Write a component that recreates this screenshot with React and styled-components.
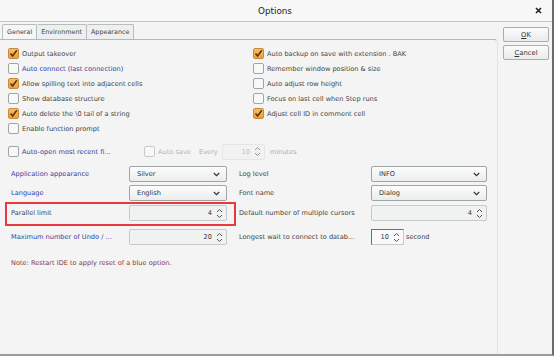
import styled, { createGlobalStyle } from "styled-components";

const GlobalStyle = createGlobalStyle`
  html, body {
    margin: 0;
    padding: 0;
    background: #f3f4f3;
  }
  * {
    box-sizing: border-box;
  }
`;

const leftChecks = [
  { text: "Output takeover", checked: true },
  { text: "Auto connect (last connection)", blue: true },
  { text: "Allow spilling text into adjacent cells", checked: true },
  { text: "Show database structure" },
  { text: "Auto delete the \\0 tail of a string", checked: true },
  { text: "Enable function prompt" },
];

const rightChecks = [
  { text: "Auto backup on save with extension . BAK", checked: true },
  { text: "Remember window position & size" },
  { text: "Auto adjust row height" },
  { text: "Focus on last cell when Step runs" },
  { text: "Adjust cell ID in comment cell", checked: true },
];

function CheckMark() {
  return (
    <svg width="9" height="9" viewBox="0 0 9 9">
      <path d="M1.5 4.6 L3.6 7 L7.8 1.2" fill="none" stroke="#5a3306" strokeWidth="1.5" />
    </svg>
  );
}

function Arrows() {
  return (
    <svg width="7" height="11" viewBox="0 0 7 11">
      <path d="M1 4 L3.5 1.5 L6 4 M1 7 L3.5 9.5 L6 7" fill="none" stroke="#555" strokeWidth="1" />
    </svg>
  );
}

function Chevron() {
  return (
    <svg width="7" height="5" viewBox="0 0 7 5">
      <path d="M0.8 1 L3.5 3.6 L6.2 1" fill="none" stroke="#333" strokeWidth="1.2" />
    </svg>
  );
}

function Check({ text, checked, blue, disabled }) {
  return (
    <CheckRow $blue={blue} $disabled={disabled}>
      <Box $checked={checked} $disabled={disabled}>
        {checked && <CheckMark />}
      </Box>
      {text}
    </CheckRow>
  );
}

function Select({ value, width }) {
  return (
    <SelectBox $width={width}>
      <span>{value}</span>
      <Chevron />
    </SelectBox>
  );
}

function Spinner({ value, width, disabled, sunken }) {
  return (
    <SpinBox $width={width} $disabled={disabled} $sunken={sunken}>
      <span>{value}</span>
      <Arrows />
    </SpinBox>
  );
}

export default function App() {
  return (
    <>
      <GlobalStyle />
      <Window>
        <TitleBar>
          <span />
          <Title>Options</Title>
          <Close>
            <svg width="7" height="7" viewBox="0 0 7 7">
              <path d="M1 1 L6 6 M6 1 L1 6" stroke="#222" strokeWidth="1.6" />
            </svg>
          </Close>
        </TitleBar>
        <Main>
          <Left>
            <Tabs>
              <Tab $active>General</Tab>
              <Tab>Environment</Tab>
              <Tab>Appearance</Tab>
            </Tabs>
            <Panel>
              <CheckGrid>
                <Column>
                  {leftChecks.map((c) => (
                    <Check key={c.text} {...c} />
                  ))}
                </Column>
                <Column>
                  {rightChecks.map((c) => (
                    <Check key={c.text} {...c} />
                  ))}
                </Column>
              </CheckGrid>

              <AutoOpenRow>
                <Slot $w={136}>
                  <Check text="Auto-open most recent fi..." blue />
                </Slot>
                <Slot $w={55}>
                  <Check text="Auto save" disabled />
                </Slot>
                <Slot $w={23}>
                  <Muted>Every</Muted>
                </Slot>
                <Spinner value="10" width={43} disabled />
                <Muted $gap={5}>minutes</Muted>
              </AutoOpenRow>

              <Form>
                <FormRow>
                  <Label $blue>Application appearance</Label>
                  <Select value="Silver" width={98} />
                  <Label>Log level</Label>
                  <Select value="INFO" width={116} />
                </FormRow>
                <FormRow>
                  <Label $blue>Language</Label>
                  <Select value="English" width={98} />
                  <Label>Font name</Label>
                  <Select value="Dialog" width={116} />
                </FormRow>
                <FormRow $gap={4}>
                  <Highlight />
                  <Label>Parallel limit</Label>
                  <Spinner value="4" width={98} />
                  <Label>Default number of multiple cursors</Label>
                  <Spinner value="4" width={116} />
                </FormRow>
                <FormRow $gap={8}>
                  <Label $blue>Maximum number of Undo / ...</Label>
                  <Spinner value="20" width={98} />
                  <Label>Longest wait to connect to datab...</Label>
                  <Inline>
                    <Spinner value="10" width={33} sunken />
                    <Label $pad={2}>second</Label>
                  </Inline>
                </FormRow>
              </Form>

              <Note>Note: Restart IDE to apply reset of a blue option.</Note>
            </Panel>
          </Left>
          <Buttons>
            <Button>
              <u>O</u>K
            </Button>
            <Button>
              <u>C</u>ancel
            </Button>
          </Buttons>
        </Main>
      </Window>
    </>
  );
}

const Window = styled.div`
  width: 554px;
  height: 356px;
  display: flex;
  flex-direction: column;
  background: #f3f4f3;
  font-family: "DejaVu Sans", sans-serif;
  font-size: 6.6px;
  color: #444;
  border-right: 2px solid #6a6a6a;
  border-bottom: 2px solid #9c9c9c;
  overflow: hidden;
`;

const TitleBar = styled.div`
  height: 22px;
  flex-shrink: 0;
  display: grid;
  grid-template-columns: 1fr auto 1fr;
  align-items: center;
  background: #f6f7f6;
  border-bottom: 1px solid #c4c6c6;
`;

const Title = styled.div`
  font-size: 8.8px;
  color: #1c1c1c;
  padding-right: 2px;
`;

const Close = styled.div`
  justify-self: end;
  display: flex;
  padding-right: 10px;
`;

const Main = styled.div`
  flex: 1;
  display: flex;
`;

const Left = styled.div`
  width: 498px;
  display: flex;
  flex-direction: column;
  padding-top: 2px;
`;

const Tabs = styled.div`
  display: flex;
  height: 15px;
  margin-left: 2px;
`;

const Tab = styled.div`
  display: flex;
  align-items: center;
  padding: 0 4px;
  border: 1px solid #b8bcbc;
  border-bottom: none;
  border-left: ${(p) => (p.$active ? "1px solid #b8bcbc" : "none")};
  border-radius: 2px 2px 0 0;
  background: ${(p) => (p.$active ? "#f5f6f5" : "#eef0ef")};
  color: #444;
  font-size: 6.4px;
`;

const Panel = styled.div`
  flex: 1;
  border-top: 1px solid #b4b8b8;
  border-right: 1px solid #e2e4e4;
  border-top-right-radius: 4px;
  padding: 6px 0 0 8px;
`;

const CheckGrid = styled.div`
  display: grid;
  grid-template-columns: 245px 1fr;
`;

const Column = styled.div`
  display: flex;
  flex-direction: column;
`;

const CheckRow = styled.div`
  height: 15px;
  display: flex;
  align-items: center;
  gap: 3px;
  white-space: nowrap;
  color: ${(p) => (p.$disabled ? "#b4b4b4" : p.$blue ? "#3b3ba2" : "#444")};
`;

const Box = styled.div`
  width: 11px;
  height: 11px;
  flex-shrink: 0;
  display: flex;
  align-items: center;
  justify-content: center;
  border-radius: 2px;
  border: 1px solid
    ${(p) => (p.$checked ? "#c9893a" : p.$disabled ? "#c8caca" : "#a2a5a5")};
  background: ${(p) =>
    p.$checked ? "linear-gradient(#f7be6a, #ef9f3c)" : "#f7f8f8"};
`;

const AutoOpenRow = styled.div`
  display: flex;
  align-items: center;
  height: 15px;
  margin-top: 8px;
`;

const Slot = styled.div`
  width: ${(p) => p.$w}px;
  flex-shrink: 0;
`;

const Muted = styled.span`
  color: #b0b0b0;
  margin-left: ${(p) => p.$gap ?? 0}px;
  white-space: nowrap;
`;

const Form = styled.div`
  display: flex;
  flex-direction: column;
  margin: 7px 0 0 3px;
`;

const FormRow = styled.div`
  position: relative;
  display: grid;
  grid-template-columns: 118px 110px 132px 116px;
  align-items: center;
  height: 16px;
  margin-top: ${(p) => p.$gap ?? 3}px;
  &:first-child {
    margin-top: 0;
  }
`;

const Label = styled.div`
  white-space: nowrap;
  overflow: hidden;
  color: ${(p) => (p.$blue ? "#3b3ba2" : "#444")};
  padding-left: ${(p) => p.$pad ?? 0}px;
`;

const Highlight = styled.div`
  position: absolute;
  left: -6px;
  top: -3px;
  width: 231px;
  height: 24px;
  border: 2px solid #e8393f;
  pointer-events: none;
`;

const SelectBox = styled.div`
  height: 16px;
  width: ${(p) => p.$width}px;
  display: flex;
  align-items: center;
  justify-content: space-between;
  padding: 0 6px 0 7px;
  border: 1px solid #a0a5a5;
  border-radius: 2px;
  background: linear-gradient(#fcfcfc, #ebeded);
  color: #333;
`;

const SpinBox = styled.div`
  height: 16px;
  width: ${(p) => p.$width}px;
  flex-shrink: 0;
  display: flex;
  align-items: center;
  justify-content: flex-end;
  gap: 4px;
  padding-right: 3px;
  border-radius: ${(p) => (p.$sunken ? "0" : "2px")};
  border: 1px solid ${(p) => (p.$disabled ? "#dcdfdf" : "#c6caca")};
  border-top-color: ${(p) => (p.$sunken ? "#6e6e6e" : undefined)};
  border-left-color: ${(p) => (p.$sunken ? "#6e6e6e" : undefined)};
  background: ${(p) => (p.$sunken ? "#f9f9f9" : "#f0f1f1")};
  opacity: ${(p) => (p.$disabled ? 0.6 : 1)};
  span {
    color: ${(p) => (p.$disabled ? "#999" : "#333")};
  }
`;

const Inline = styled.div`
  display: flex;
  align-items: center;
`;

const Note = styled.div`
  margin: 14px 0 0 3px;
  color: #8c3a3a;
`;

const Buttons = styled.div`
  display: flex;
  flex-direction: column;
  gap: 3px;
  padding-top: 5px;
  margin-left: 5px;
`;

const Button = styled.div`
  width: 46px;
  height: 15px;
  display: flex;
  align-items: center;
  justify-content: center;
  border: 1px solid #a9adad;
  border-radius: 2px;
  background: linear-gradient(#fbfbfb, #eaecec);
  color: #333;
  font-size: 6.8px;
  u {
    text-decoration-thickness: 0.5px;
    text-underline-offset: 1px;
  }
`;
